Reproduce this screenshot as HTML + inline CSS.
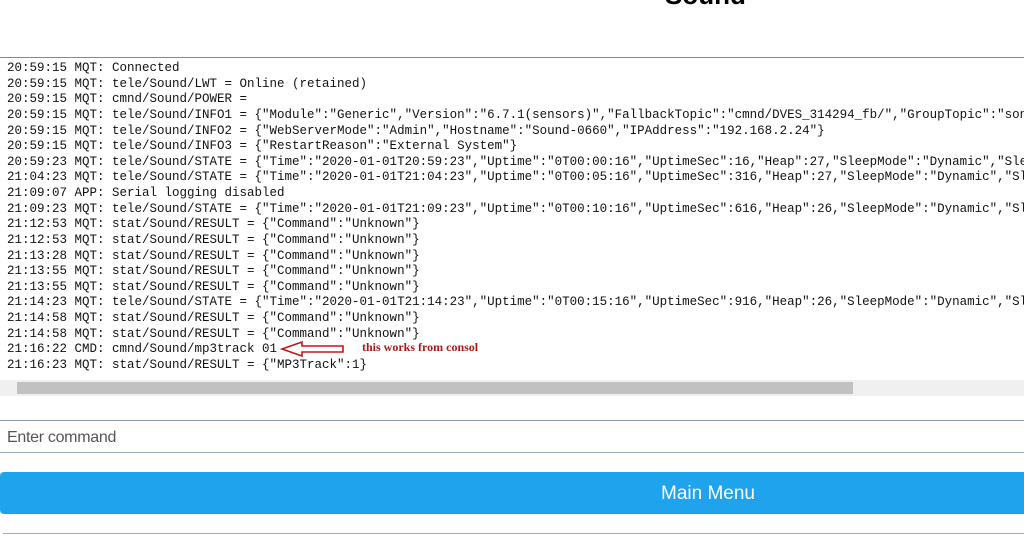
<!DOCTYPE html>
<html><head><style>
body{margin:0;width:1024px;height:541px;overflow:hidden;background:#fff;position:relative;font-family:"Liberation Sans",sans-serif}
h2{position:absolute;left:665px;top:-20px;margin:0;font-size:26px;font-weight:bold;color:#000}
#log{position:absolute;left:0;top:57px;width:1030px;height:340px;border-top:1px solid #888;overflow:hidden}
#log pre{margin:0;position:absolute;left:7px;top:3px;font-family:"Liberation Mono",monospace;font-size:12.5px;line-height:15.63px;color:#111;white-space:pre}
#sb{position:absolute;left:0;top:380px;width:1024px;height:16px;background:#f0f0f0}
#thumb{position:absolute;left:17px;top:2px;width:836px;height:12px;background:#c1c1c1}
#inp{position:absolute;left:0;top:420px;width:1030px;height:33px;border-top:1px solid #8a9aaa;border-bottom:1px solid #9aaabb;font-size:16px;color:#555;line-height:33px;padding-left:7px;box-sizing:border-box;letter-spacing:-0.3px}
#btn{position:absolute;left:0;top:472px;width:1416px;height:42px;background:#1fa3ec;border-radius:4px;color:#fff;font-size:19px;line-height:43px;text-align:center}
#hr{position:absolute;left:3px;top:533px;width:1021px;height:1px;background:#aaa}
#note{position:absolute;left:362px;top:340px;font-family:"Liberation Serif",serif;font-weight:bold;font-size:12px;color:#b01818}
</style></head><body>
<h2>Sound</h2>
<div id="log"><pre>
20:59:15 MQT: Connected
20:59:15 MQT: tele/Sound/LWT = Online (retained)
20:59:15 MQT: cmnd/Sound/POWER = 
20:59:15 MQT: tele/Sound/INFO1 = {"Module":"Generic","Version":"6.7.1(sensors)","FallbackTopic":"cmnd/DVES_314294_fb/","GroupTopic":"sonoffs"}
20:59:15 MQT: tele/Sound/INFO2 = {"WebServerMode":"Admin","Hostname":"Sound-0660","IPAddress":"192.168.2.24"}
20:59:15 MQT: tele/Sound/INFO3 = {"RestartReason":"External System"}
20:59:23 MQT: tele/Sound/STATE = {"Time":"2020-01-01T20:59:23","Uptime":"0T00:00:16","UptimeSec":16,"Heap":27,"SleepMode":"Dynamic","Sleep"}
21:04:23 MQT: tele/Sound/STATE = {"Time":"2020-01-01T21:04:23","Uptime":"0T00:05:16","UptimeSec":316,"Heap":27,"SleepMode":"Dynamic","Sl"}
21:09:07 APP: Serial logging disabled
21:09:23 MQT: tele/Sound/STATE = {"Time":"2020-01-01T21:09:23","Uptime":"0T00:10:16","UptimeSec":616,"Heap":26,"SleepMode":"Dynamic","Sl"}
21:12:53 MQT: stat/Sound/RESULT = {"Command":"Unknown"}
21:12:53 MQT: stat/Sound/RESULT = {"Command":"Unknown"}
21:13:28 MQT: stat/Sound/RESULT = {"Command":"Unknown"}
21:13:55 MQT: stat/Sound/RESULT = {"Command":"Unknown"}
21:13:55 MQT: stat/Sound/RESULT = {"Command":"Unknown"}
21:14:23 MQT: tele/Sound/STATE = {"Time":"2020-01-01T21:14:23","Uptime":"0T00:15:16","UptimeSec":916,"Heap":26,"SleepMode":"Dynamic","Sl"}
21:14:58 MQT: stat/Sound/RESULT = {"Command":"Unknown"}
21:14:58 MQT: stat/Sound/RESULT = {"Command":"Unknown"}
21:16:22 CMD: cmnd/Sound/mp3track 01
21:16:23 MQT: stat/Sound/RESULT = {"MP3Track":1}</pre></div>
<svg style="position:absolute;left:280px;top:340px" width="66" height="18"><path d="M2 9 L22 2 L22 6 L63 6 L63 12 L22 12 L22 16 Z" fill="none" stroke="#c01818" stroke-width="1.6"/></svg>
<div id="note">this works from consol</div>
<div id="sb"><div id="thumb"></div></div>
<div id="inp">Enter command</div>
<div id="btn">Main Menu</div>
<div id="hr"></div>
</body></html>
